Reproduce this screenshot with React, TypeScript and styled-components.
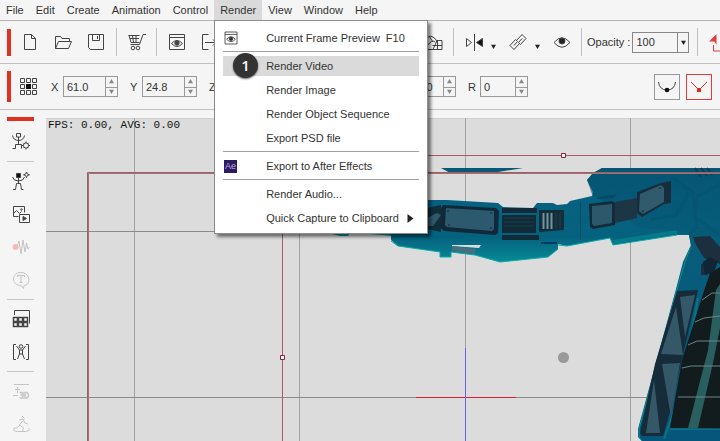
import React from "react";
import styled, { createGlobalStyle, css } from "styled-components";

const GlobalStyle = createGlobalStyle`
  *, *::before, *::after { box-sizing: border-box; }
  body {
    margin: 0;
    overflow: hidden;
    background: #f5f5f5;
    color: #333;
    font: 11px/16px "Liberation Sans", Arial, sans-serif;
  }
  button, input, select { font: inherit; color: inherit; }
  svg { display: block; }
`;

const Page = styled.div`
  display: flex;
  flex-direction: column;
  height: 100vh;
`;

/* ---------- menu bar ---------- */

const MenuBar = styled.nav`
  display: flex;
  height: 21px;
  border-bottom: 1px solid #b4b4b4;
`;

const MenuSlot = styled.div`
  position: relative;
`;

const MenuButton = styled.button<{ $open?: boolean }>`
  height: 20px;
  padding: 0 6px;
  border: 0;
  background: ${(p) => (p.$open ? "#dadada" : "transparent")};
`;

const Menu = styled.div`
  display: flex;
  flex-direction: column;
  position: absolute;
  z-index: 5;
  top: 20px;
  left: 0;
  width: 214px;
  padding: 5px 8px 3px;
  border: 1px solid #8c8c8c;
  background: #fff;
  box-shadow: 3px 3px 3px rgba(0, 0, 0, 0.5);
`;

const MenuItem = styled.button<{ $active?: boolean }>`
  position: relative;
  display: grid;
  grid-template-columns: 43px auto 1fr;
  align-items: center;
  width: 100%;
  height: 20px;
  margin: 2px 0;
  padding: 0;
  border: 0;
  text-align: left;
  white-space: nowrap;
  background: ${(p) => (p.$active ? "#dadada" : "transparent")};
`;

const Shortcut = styled.span`
  padding-left: 6px;
`;

const Submenu = styled.span`
  justify-self: end;
  margin-right: 4px;
`;

const MenuRule = styled.hr`
  width: 100%;
  height: 1px;
  margin: 1px 0 2px;
  border: 0;
  background: #a0a0a0;
`;

const AeLogo = styled.span`
  display: block;
  width: 13px;
  height: 13px;
  margin-left: 1px;
  background: #2b1a5c;
  color: #c9a5f2;
  font-size: 9px;
  line-height: 13px;
  text-align: center;
`;

const StepBadge = styled.span`
  position: absolute;
  top: -3px;
  left: 10px;
  width: 25px;
  height: 25px;
  border-radius: 50%;
  background: #333;
  color: #fff;
  box-shadow: 0 1px 2px rgba(0, 0, 0, 0.6);
  font: 600 15px/25px "Open Sans", sans-serif;
  text-align: center;
`;

/* ---------- toolbars ---------- */

const Toolbar = styled.div<{ $tall?: boolean }>`
  display: flex;
  align-items: center;
  height: ${(p) => (p.$tall ? 46 : 43)}px;
  padding: 0 8px 0 7px;
  border-bottom: 1px solid #c0c0c0;
`;

const Grip = styled.span<{ $tall?: boolean }>`
  flex: none;
  width: 4px;
  height: ${(p) => (p.$tall ? 31 : 27)}px;
  background: #e0301e;
`;

const Cluster = styled.div<{ $gap?: number; $pad?: number; $min?: number }>`
  display: flex;
  flex: none;
  align-items: center;
  gap: ${(p) => p.$gap ?? 0}px;
  padding-left: ${(p) => p.$pad ?? 0}px;
  min-width: ${(p) => p.$min ?? 0}px;
`;

const EndCluster = styled(Cluster)`
  margin-left: auto;
`;

const ToolButton = styled.button<{ $dim?: boolean; $boxed?: string }>`
  display: flex;
  flex: none;
  align-items: center;
  justify-content: center;
  width: 20px;
  height: 20px;
  padding: 0;
  border: 0;
  background: transparent;
  color: #444;
  ${(p) => p.$dim && css`color: #c4c4c4;`}
  ${(p) =>
    p.$boxed &&
    css`
      width: 26px;
      height: 26px;
      border: 1px solid ${p.$boxed};
    `}
`;

const CaretButton = styled(ToolButton)`
  width: 8px;
  padding-top: 8px;
`;

const Divider = styled.span<{ $before?: number; $after?: number }>`
  flex: none;
  width: 1px;
  height: 28px;
  margin: 0 ${(p) => p.$after ?? 10}px 0 ${(p) => p.$before ?? 10}px;
  background: #c0c0c0;
`;

const Field = styled.label<{ $gap?: number }>`
  display: flex;
  align-items: center;
  gap: ${(p) => p.$gap ?? 5}px;
  white-space: nowrap;
`;

const FieldName = styled.span`
  width: 7px;
`;

const Spin = styled.span<{ $w: number }>`
  display: flex;
  width: ${(p) => p.$w}px;
  height: 21px;
  border: 1px solid #999;
`;

const SpinInput = styled.input`
  flex: 1;
  min-width: 0;
  padding: 0 3px;
  border: 0;
  background: transparent;
  outline: 0;
`;

const SpinKeys = styled.span`
  display: grid;
  grid-template-rows: 1fr 1fr;
  width: 12px;
  border-left: 1px solid #999;
`;

const SpinKey = styled.button`
  display: flex;
  align-items: center;
  justify-content: center;
  padding: 0;
  border: 0;
  background: transparent;
  & + & { border-top: 1px solid #999; }
`;

const SelectBox = styled.span`
  position: relative;
  width: 57px;
  height: 21px;
  border: 1px solid #888;
`;

const Select = styled.select`
  appearance: none;
  width: 100%;
  height: 100%;
  padding: 0 3px;
  border: 0;
  background: transparent;
`;

const SelectArrow = styled.span`
  position: absolute;
  inset: 0 0 0 auto;
  display: flex;
  align-items: center;
  justify-content: center;
  width: 11px;
  border-left: 1px solid #888;
  pointer-events: none;
`;

/* ---------- body ---------- */

const Body = styled.div`
  display: flex;
  flex: 1;
  min-height: 0;
`;

const Side = styled.aside`
  flex: none;
  width: 46px;
  padding: 7px 12px 0 7px;
`;

const SideGrip = styled.span`
  display: block;
  height: 4px;
  margin-bottom: 11px;
  background: #e0301e;
`;

const SideGroup = styled.div`
  display: flex;
  flex-direction: column;
  align-items: center;
  gap: 13px;
`;

const SideRule = styled.hr`
  height: 1px;
  margin: 9px 0;
  border: 0;
  background: #c8c8c8;
`;

const Stage = styled.main`
  position: relative;
  flex: 1;
  min-width: 0;
  margin-top: 8px;
  background: #dcdcdc;
`;

const Stats = styled.div`
  position: absolute;
  top: 0;
  left: 2px;
  color: #111;
  font: 11px/14px "Liberation Mono", "Courier New", monospace;
  white-space: pre;
`;

const Scene = styled.svg`
  width: 100%;
  height: 100%;
`;

/* ---------- icons ---------- */

const shapes: Record<string, React.ReactNode> = {
  file: <path d="M4.500 2.500h7l4 4v11h-11zM11.500 2.500v4h4" />,
  folder: <path d="M2.500 16.500v-12h5l1.500 2h7.500v3M2.500 16.500l3-7h13l-3 7z" />,
  save: <path d="M2.500 2.500h15v15h-13l-2-2zM6.500 2.500v6h7v-6M11.500 4v3" />,
  cart: (
    <>
      <path d="M1.500 3.500h11M2 3.500l2 7h8.500M3 6.500h9M5.500 3.500l1 7M9 3.500v7M19 2.500h-3l-3.500 10h-9" />
      <circle cx="6" cy="16" r="1.800" /><circle cx="11" cy="16" r="1.800" />
    </>
  ),
  preview: (
    <>
      <path d="M2.500 2.500h15v15h-15zM2.500 5.500h15M4.500 11.500q5.500-6 11 0q-5.500 6-11 0z" />
      <circle cx="10" cy="11" r="2.200" fill="currentColor" />
    </>
  ),
  exporter: <path d="M8.500 2.500h-6v15h6M5 10.500h11M13 7.500l3 3-3 3" />,
  mesh: (
    <path d="M1 10q3-8 8-5q3 1 5 7M1 17.500h17v-9h-5l-4 9M3 14q5-7 8-4M13.500 8.500v9M8.500 13.500h9.500M5 4l4 6" />
  ),
  flip: (
    <>
      <path d="M10.500 2v17M2.500 6.500v8l5-4z" />
      <path d="M18.500 6.500v8l-6-4z" fill="#111" />
    </>
  ),
  link: (
    <path d="M8.500 8.500l5.500-6 4 4-5.500 6-2-2 3.500-4M11.500 11.500l-5.500 6-4-4 5.500-6 2 2-3.500 4" />
  ),
  eye: (
    <>
      <path d="M2 10.500q8-9.500 16 0q-8 9.500-16 0z" />
      <circle cx="10" cy="9" r="3" fill="#222" />
    </>
  ),
  pivot: (
    <>
      <path d="M1.500 1.500h4v4h-4zM7.500 1.500h4v4h-4zM13.500 1.500h4v4h-4zM1.500 7.500h4v4h-4zM13.500 7.500h4v4h-4zM1.500 13.500h4v4h-4zM7.500 13.500h4v4h-4zM13.500 13.500h4v4h-4z" />
      <path d="M7 7h5v5H7z" fill="#111" stroke="none" />
    </>
  ),
  curve: (
    <>
      <path d="M1.500 5q1 8 8.500 8t8.500-8" />
      <circle cx="10" cy="13" r="2.300" fill="#111" stroke="none" />
    </>
  ),
  corner: (
    <>
      <path d="M2 5l8 8 8-8" />
      <path d="M8 11h4v4h-4z" fill="currentColor" stroke="none" />
    </>
  ),
  branch: (
    <>
      <path d="M1 9.500L8.500 2v11l-2-3.500z" fill="currentColor" stroke="none" />
      <path d="M5.500 13v6h13" />
    </>
  ),
  actorGear: (
    <>
      <path d="M5.500 1.500h4v3.500h-4zM7.500 5v7M1.500 3.500q1 5 6 5t6-5M1.500 16.500h3v-4h6v4" />
      <circle cx="15" cy="13.500" r="2.600" />
      <path d="M15 9.500v1.500M15 16v1.500M11 13.500h1.500M17.500 13.500h1.500M12.300 10.800l1 1M16.700 15.200l1 1M17.700 10.800l-1 1M13.300 15.200l-1 1" />
    </>
  ),
  actorNew: (
    <>
      <path d="M5.500 2.500h4v4h-4z" fill="#111" />
      <path d="M7.500 6.500v6M1.500 6q1 4 6 4t6-4M2 18.500h2.500l1-6h4l1 6h2" />
      <path d="M15.500 1l.8 2 2.200.8-2.200.8-.8 2-.8-2-2.200-.8 2.200-.8z" />
    </>
  ),
  media: (
    <>
      <path d="M2.500 12.500v-10h11v6M2.500 12.500h5M2.500 9.500l3-3 3 3 2-2" />
      <circle cx="10.500" cy="5.500" r=".8" />
      <path d="M8.500 10.500h10v8h-10z" />
      <path d="M12 12.500v4l3.500-2z" fill="currentColor" />
    </>
  ),
  voice: (
    <>
      <path d="M6 10l2-6 2 13 2-14 2 12 1.500-9 1.500 6 1.500-2" />
      <circle cx="4.500" cy="10" r="3" fill="#f3bcbc" stroke="none" />
    </>
  ),
  bubble: <path d="M10 2.500c10 0 10 13 3 13l-.5 3-2.500-3c-10 0-10-13 0-13zM6.500 7v-1.500h7V7M10 5.500v7M8.500 12.500h3" />,
  sprites: (
    <>
      <path d="M3.500 6v-4.500h15v13" />
      <path strokeWidth="1.500" d="M2.500 8.500h4v4h-4zM7.500 8.500h4v4h-4zM12.500 8.500h4v4h-4zM2.500 13.500h4v4h-4zM7.500 13.500h4v4h-4zM12.500 13.500h4v4h-4z" />
    </>
  ),
  actorBox: (
    <>
      <path d="M5 2.500H2.500v15H5M15 2.500h2.500v15H15" />
      <circle cx="10" cy="4.500" r="1.800" />
      <path d="M5.500 4l3 4h3l3-4M8.500 8v4l-2 5M11.500 8v4l2 5M8.500 12h3" />
    </>
  ),
  depth: (
    <>
      <path d="M3 3.500h15M6.500 6v6M4 8.500h5M2 14.500h5" />
      <path strokeWidth="1.500" d="M8.500 11.500h3.500v2.500h-2.500 2.500v3h-3.500M14 11.500v5.500h2q3-2.500 0-5.500z" />
    </>
  ),
  runner: (
    <path d="M11 2l2.500 2.500M8 6l4-1 2 4 3 1M11.500 7l-3 4 4 3-1 3M9 11l-3 3H3M3.500 14q-3 3 3 3.500h8q6-1 3-3.500" />
  ),
};

function Icon({ name, size = 20, color = "currentColor" }: { name: string; size?: number; color?: string }) {
  return (
    <svg width={size} height={size} viewBox="0 0 20 20" fill="none" color={color} stroke="currentColor" aria-hidden="true">
      {shapes[name]}
    </svg>
  );
}

function Triangle({ dir, size = 5, color = "#222" }: { dir: "up" | "down" | "right"; size?: number; color?: string }) {
  const d = { up: "M0 5h6L3 0z", down: "M0 1h6L3 6z", right: "M1 0v6l4-3z" }[dir];
  return (
    <svg width={size} height={size} viewBox="0 0 6 6" aria-hidden="true">
      <path d={d} fill={color} />
    </svg>
  );
}

function SpinField({ label, value, width = 55 }: { label: string; value?: string; width?: number }) {
  return (
    <Field>
      <FieldName>{label}</FieldName>
      <Spin $w={width}>
        <SpinInput type="text" aria-label={label} defaultValue={value} />
        <SpinKeys>
          <SpinKey aria-label={`Increase ${label}`}><Triangle dir="up" color="#888" /></SpinKey>
          <SpinKey aria-label={`Decrease ${label}`}><Triangle dir="down" color="#888" /></SpinKey>
        </SpinKeys>
      </Spin>
    </Field>
  );
}

function Tool({ name, label, dim, color }: { name: string; label: string; dim?: boolean; color?: string }) {
  return (
    <ToolButton $dim={dim} aria-label={label}>
      <Icon name={name} color={color} />
    </ToolButton>
  );
}

/* ---------- canvas drawing ---------- */

function Robot() {
  return (
    <g>
      <defs>
        <linearGradient id="arm" x1="0" y1="200" x2="0" y2="262" gradientUnits="userSpaceOnUse">
          <stop offset="0" stopColor="#07607f" />
          <stop offset=".6" stopColor="#05627f" />
          <stop offset="1" stopColor="#078b96" />
        </linearGradient>
        <linearGradient id="torso" x1="680" y1="170" x2="700" y2="440" gradientUnits="userSpaceOnUse">
          <stop offset="0" stopColor="#04506d" />
          <stop offset=".3" stopColor="#075d7b" />
          <stop offset="1" stopColor="#06557a" />
        </linearGradient>
      </defs>
      <path d="M441 168h82l-25 4-25 1-1 1h-20z" fill="#075a75" />
      <path d="M328 233h22l-2 3h-8zM358 233h34v3l-10-1z" fill="#08989c" />
      <path
        fill="url(#arm)"
        d="M391 200H447L498 203L503 207L533 208L537 203L553 203L557 205L567 204L570 201L592 196L593 192L587 180L593 173L602 168H720V246L691 246L689 235L677 235L613 245L610 238L567 246L558 244V249L548 257L500 262L475 255L451 252V257H440V252L398 246L391 240Z"
      />
      <path d="M391 241L398 246L440 252V257H451V252L475 255L500 262L548 257L558 249M558 245L567 246L610 238L613 245L677 235" fill="none" stroke="#09aaa9" />
      <path d="M613 242L677 232" fill="none" stroke="#078f98" strokeWidth="4" opacity=".5" />
      <path d="M593 173L602 168H720V250L689 232L640 228L592 194L587 180Z" fill="url(#torso)" opacity=".65" />
      <path d="M452 245h29l-2 3-27-2z" fill="#dcdcdc" />
      <path d="M452 246l24 3-2 5-22-3z" fill="#47707f" />
      <path d="M427 208l14-3v27l-14-3z" fill="#102d3a" />
      <path d="M427 218l10-5 4 2-8 11h-6z" fill="#31596b" />
      <path d="M443 205l53 3 3 3-1 22-3 2-51-4-3-3v-20z" fill="#10293a" />
      <path d="M446 208l48 3v18l-2 2-45-4-2-2z" fill="#2c596e" />
      <path d="M502 208h35v5h-35zM502 215h34v18h-34zM502 235h37v5h-37z" fill="#112a37" />
      <path d="M504 218h30M504 222h30M504 226h30" stroke="#1e3b48" />
      <path d="M539 210h25v20l-25 2z" fill="#132d3b" />
      <path d="M543.500 213v16M547.500 213v16M551.500 213v16" stroke="#7593a0" strokeWidth="2" />
      <path d="M556 213v15M560 213v15" stroke="#25414e" />
      <path d="M580.500 202v38" stroke="#084b65" />
      <path d="M541 242h16v2h-16z" fill="#023b68" />
      <path d="M615 202L637 198V218L615 223z" fill="#1d3645" />
      <path d="M589 204l23-3 3 2v22l-22 4-3-2z" fill="#112b39" />
      <path d="M592 206l20-2v19l-18 3-2-2z" fill="#2d586b" />
      <path d="M599 197l18-3-3 4-18 1z" fill="#064a67" />
      <path d="M637 192l24-9 10-2v22l-7 1-22 13-5-4z" fill="#172d3b" />
      <path d="M640 194l21-9 3 3v14l-21 12-4-3z" fill="#315a6d" />
      <g fill="#163647">
        <circle cx="448" cy="211" r="1" /><circle cx="491" cy="213" r="1" />
        <circle cx="491" cy="228" r="1" /><circle cx="449" cy="225" r="1" />
        <circle cx="643" cy="211" r="1" /><circle cx="660" cy="188" r="1" />
      </g>

      <path d="M689 235v-8h31v214h-78l-4-4v-8l38-140 7-27 8-17z" fill="url(#torso)" />
      <path d="M691 246l-6 16-8 27-38 140v8l3 4" fill="none" stroke="#0a8f92" />
      <path d="M673 178l20 14 4 35-8 8M720 184l-22 12-4 20 26 20M650 220l26-5 13-22" fill="none" stroke="#044c69" strokeWidth="3" opacity=".3" />
      <path d="M695 168l6 9M701 168l6 8M707 168l5 7" stroke="#123a50" strokeWidth="2" />
      <path d="M693 237l17-1 10 11v17l-16-6-9-15zM701 264l8-3 2 6-4 8h-6z" fill="#1c2f3e" />
      <path d="M677 291l21-1-19 82-9 40-7 24h-21l-2-3 15-69z" fill="#162c3b" />
      <path d="M680 297l15-2-10 42zM676 307l7 48-22-1zM662 364l18-1-9 54zM654 380l6 53h-14z" fill="#345868" />
      <path d="M698 298l-8 45-10 50-16 46" fill="none" stroke="#0b7580" strokeWidth="2" />
      <path d="M702 297l8-24 10-6v162l-50-1 12-68z" fill="#121b1d" />
      <path d="M716 290l4-6v44l-7 35-15 65h-10l20-78z" fill="#2a5f60" />
      <path
        d="M702 300l10-7h8M695 322l9-4 16-2M688 345l9-4h23M682 368l9-2h29M678 397h42"
        fill="none" stroke="#6c8588"
      />
      <path d="M670 429h50" stroke="#15869a" />
      <path d="M703 262l7-5 8 4-4 11-9 3z" fill="#102536" />
    </g>
  );
}

function CanvasScene() {
  return (
    <Scene viewBox="46 118 674 323" preserveAspectRatio="xMinYMin slice" role="img" aria-label="Stage">
      <path d="M46 118.500h674" stroke="#cfcfcf" />
      <path d="M134.500 118v323M299.500 118v323M465.500 118v323M630.500 118v323" stroke="#a2a2a2" />
      <path d="M46 231.500h674M46 397.500h674" stroke="#8c8c8c" />
      <Robot />
      <path d="M87.500 441V172.500H720" fill="none" stroke="#787070" />
      <path d="M88.500 441V173.500H720" fill="none" stroke="#c2606c" />
      <path d="M282.500 441V155.500H720" fill="none" stroke="#a85a66" />
      <path d="M280.500 355.500h4v4h-4zM561.500 153.500h4v4h-4z" fill="#fff" stroke="#8d2038" />
      <circle cx="563.500" cy="357.500" r="5.500" fill="#999" />
      <path d="M416 397.500h100" stroke="#e02030" />
      <path d="M465.500 348v93" stroke="#6464f0" />
    </Scene>
  );
}

/* ---------- page ---------- */

function RenderMenu() {
  return (
    <Menu role="menu">
      <MenuItem role="menuitem">
        <Icon name="preview" size={16} />
        <span>Current Frame Preview</span>
        <Shortcut>F10</Shortcut>
      </MenuItem>
      <MenuRule />
      <MenuItem role="menuitem" $active>
        <span />
        <span>Render Video</span>
        <StepBadge>1</StepBadge>
      </MenuItem>
      <MenuItem role="menuitem"><span /><span>Render Image</span></MenuItem>
      <MenuItem role="menuitem"><span /><span>Render Object Sequence</span></MenuItem>
      <MenuItem role="menuitem"><span /><span>Export PSD file</span></MenuItem>
      <MenuRule />
      <MenuItem role="menuitem"><AeLogo>Ae</AeLogo><span>Export to After Effects</span></MenuItem>
      <MenuRule />
      <MenuItem role="menuitem"><span /><span>Render Audio...</span></MenuItem>
      <MenuItem role="menuitem">
        <span />
        <span>Quick Capture to Clipboard</span>
        <Submenu><Triangle dir="right" size={9} /></Submenu>
      </MenuItem>
    </Menu>
  );
}

const menus = ["File", "Edit", "Create", "Animation", "Control", "Render", "View", "Window", "Help"];

export default function App() {
  return (
    <Page>
      <GlobalStyle />
      <MenuBar>
        {menus.map((name) => (
          <MenuSlot key={name}>
            <MenuButton $open={name === "Render"}>{name}</MenuButton>
            {name === "Render" && <RenderMenu />}
          </MenuSlot>
        ))}
      </MenuBar>

      <Toolbar>
        <Grip />
        <Cluster $min={413} $pad={9}>
          <Cluster $gap={13}>
            <Tool name="file" label="New project" />
            <Tool name="folder" label="Open project" />
            <Tool name="save" label="Save project" />
          </Cluster>
          <Divider />
          <Tool name="cart" label="Store" />
          <Divider $before={9} />
          <Cluster $gap={13}>
            <Tool name="preview" label="Preview" />
            <Tool name="exporter" label="Export" />
          </Cluster>
        </Cluster>
        <Tool name="mesh" label="Deform" />
        <Divider $before={9} />
        <Cluster $gap={5}>
          <Tool name="flip" label="Flip" />
          <CaretButton aria-label="Flip options"><Triangle dir="down" /></CaretButton>
        </Cluster>
        <Cluster $pad={11} $gap={5}>
          <Tool name="link" label="Link" />
          <CaretButton aria-label="Link options"><Triangle dir="down" /></CaretButton>
        </Cluster>
        <Cluster $pad={11}>
          <Tool name="eye" label="Show or hide" />
        </Cluster>
        <Divider $before={9} $after={5} />
        <Field $gap={2}>
          Opacity :
          <SelectBox>
            <Select aria-label="Opacity" defaultValue="100">
              <option>100</option>
              <option>75</option>
              <option>50</option>
            </Select>
            <SelectArrow><Triangle dir="down" /></SelectArrow>
          </SelectBox>
        </Field>
        <Divider $before={8} />
        <Tool name="branch" label="Path" color="#e83a3a" />
      </Toolbar>

      <Toolbar $tall>
        <Grip $tall />
        <Cluster $pad={8} $gap={12}>
          <Tool name="pivot" label="Anchor point" />
          <SpinField label="X" value="61.0" />
          <SpinField label="Y" value="24.8" />
          <SpinField label="Z" />
        </Cluster>
        <Cluster $pad={113} $gap={12}>
          <SpinField label="H" value="100.0" />
          <SpinField label="R" value="0" width={48} />
        </Cluster>
        <EndCluster $gap={6}>
          <ToolButton $boxed="#999" aria-label="Smooth curve"><Icon name="curve" /></ToolButton>
          <ToolButton $boxed="#e83a3a" aria-label="Sharp corner"><Icon name="corner" color="#e02a20" /></ToolButton>
        </EndCluster>
      </Toolbar>

      <Body>
        <Side>
          <SideGrip />
          <SideGroup><Tool name="actorGear" label="Composer" /></SideGroup>
          <SideRule />
          <SideGroup>
            <Tool name="actorNew" label="Create character" />
            <Tool name="media" label="Create media" />
            <Tool name="voice" label="Create voice" dim />
            <Tool name="bubble" label="Text bubble" dim />
          </SideGroup>
          <SideRule />
          <SideGroup>
            <Tool name="sprites" label="Sprite editor" />
            <Tool name="actorBox" label="Bone editor" />
          </SideGroup>
          <SideRule />
          <SideGroup>
            <Tool name="depth" label="3D motion" dim />
            <Tool name="runner" label="Motion path" dim />
          </SideGroup>
        </Side>
        <Stage>
          <CanvasScene />
          <Stats>FPS: 0.00, AVG: 0.00</Stats>
        </Stage>
      </Body>
    </Page>
  );
}
